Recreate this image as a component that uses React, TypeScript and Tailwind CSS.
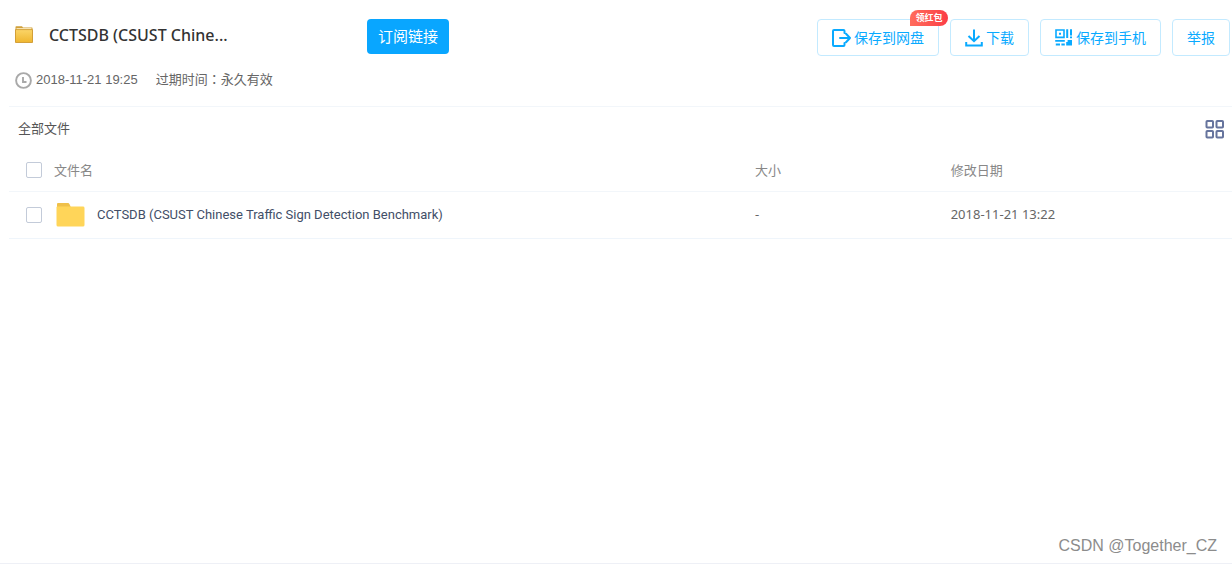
import { useState } from "react";
import type { ReactNode } from "react";

type FileRow = { name: string; size: string; modified: string };

const files: FileRow[] = [
  { name: "CCTSDB (CSUST Chinese Traffic Sign Detection Benchmark)", size: "-", modified: "2018-11-21 13:22" },
];

function SmallFolderIcon() {
  return (
    <svg width="18" height="18" viewBox="0 0 18 18" className="shrink-0" aria-hidden="true">
      <defs>
        <linearGradient id="folder-face" x1="0" y1="0" x2="0" y2="1">
          <stop offset="0" stopColor="#fbd568" />
          <stop offset="1" stopColor="#efb62f" />
        </linearGradient>
      </defs>
      <path d="M0.5 1 Q0.5 0.3 1.2 0.3 H7 L8 1.5 H17 Q17.5 1.5 17.5 2 V16 H0.5 Z" fill="#d0a03a" />
      <rect x="1.5" y="2.2" width="15" height="2" fill="#fff3cf" />
      <path d="M0.5 3.6 H17.5 V16.5 H0.5 Z" fill="url(#folder-face)" stroke="#cf9a30" strokeWidth="0.9" />
    </svg>
  );
}

function FolderIcon() {
  return (
    <svg width="29" height="25" viewBox="0 0 29 25" className="shrink-0" aria-hidden="true">
      <path d="M1 2 Q1 1 2 1 H12 Q13 1 13.4 2 L14.6 4.6 V8 H1 Z" fill="#efc04a" />
      <path d="M1 4.6 H27 Q28.5 4.6 28.5 6 V23 Q28.5 24.5 27 24.5 H2 Q0.5 24.5 0.5 23 V5 Z" fill="#ffd559" />
    </svg>
  );
}

function ClockIcon() {
  return (
    <svg width="17" height="17" viewBox="0 0 17 17" fill="none" stroke="#a9a9a9" className="shrink-0" aria-hidden="true">
      <circle cx="8.5" cy="8.5" r="7.4" strokeWidth="1.9" />
      <path d="M8 5 V10 H11.5" strokeWidth="1.9" />
    </svg>
  );
}

function SaveIcon() {
  return (
    <svg width="19" height="18" viewBox="0 0 19 18" fill="none" stroke="#09aaff" strokeWidth="2" strokeLinecap="round" strokeLinejoin="round" aria-hidden="true">
      <path d="M12.5 4 V2 Q12.5 1 11.5 1 H2 Q1 1 1 2 V16 Q1 17 2 17 H11.5 Q12.5 17 12.5 16 V14" />
      <path d="M8 9 H18 M14 4.8 L18 9 L14 13.2" />
    </svg>
  );
}

function DownloadIcon() {
  return (
    <svg width="18" height="18" viewBox="0 0 18 18" fill="none" stroke="#09aaff" strokeWidth="2" aria-hidden="true">
      <path d="M9 0.5 V12 M3.5 7 L9 12.2 L14.5 7" />
      <path d="M1.2 13 V16.5 H16.8 V13" />
    </svg>
  );
}

function QrIcon() {
  return (
    <svg width="18" height="17" viewBox="0 0 18 17" aria-hidden="true">
      <path d="M1 1 H9 V8.4 H1 Z" fill="none" stroke="#09aaff" strokeWidth="1.6" />
      <path d="M4 3.7 H6 V5.7 H4 Z M11.2 0.2 H13.2 V9 H11.2 Z M15 0.2 H17 V6.4 H15 Z M15 7.4 H17 V9.2 H15 Z M0.2 11 H9.8 V12.8 H0.2 Z M0.8 14.6 H5 V16.4 H0.8 Z M6.4 14.6 H9.8 V16.4 H6.4 Z M12.6 11 H17 V16.4 H11.2 V13 H12.6 Z" fill="#09aaff" />
    </svg>
  );
}

function GridIcon() {
  return (
    <svg width="20" height="20" viewBox="0 0 20 20" fill="none" stroke="#66749d" strokeWidth="2" aria-hidden="true">
      <rect x="1.5" y="2" width="6.5" height="6.5" rx="0.8" />
      <rect x="11.5" y="2" width="6.5" height="6.5" rx="0.8" />
      <rect x="1.5" y="12" width="6.5" height="6.5" rx="0.8" />
      <rect x="11.5" y="12" width="6.5" height="6.5" rx="0.8" />
    </svg>
  );
}

function ActionButton({ icon, badge, children }: { icon?: ReactNode; badge?: string; children: ReactNode }) {
  return (
    <button type="button" className="relative flex h-[37px] items-center gap-[3px] rounded border border-[#c3eaff] bg-white px-[14px] text-sm whitespace-nowrap text-[#09aaff]">
      {icon}
      {children}
      {badge && (
        <span className="absolute -top-[10px] -right-[10px] flex h-4 w-[38px] items-center justify-center rounded-t-lg rounded-br-lg bg-linear-to-r from-[#ff6b5c] to-[#fb3c46] text-[9px] font-bold text-white">
          {badge}
        </span>
      )}
    </button>
  );
}

function CheckBox({ label, checked, onChange }: { label: string; checked: boolean; onChange: () => void }) {
  return (
    <input
      type="checkbox"
      aria-label={label}
      checked={checked}
      onChange={onChange}
      className="size-4 shrink-0 appearance-none rounded-xs border border-[#c3cbd9] bg-white checked:bg-[#09aaff]"
    />
  );
}

export default function App() {
  const [selected, setSelected] = useState<string[]>([]);
  const allSelected = selected.length === files.length;

  const toggle = (name: string) =>
    setSelected((prev) => (prev.includes(name) ? prev.filter((n) => n !== name) : [...prev, name]));

  return (
    <div className="flex min-h-screen flex-col border-b border-[#eef0f6] bg-white pl-[9px] font-['Noto_Sans','Noto_Sans_CJK_SC',sans-serif] text-[13px]">
      <header className="border-b border-[#f2f6fa] pt-[19px] pb-4 pl-[6px]">
        <div className="flex items-start justify-between pr-[2px]">
          <div className="flex items-start">
            <div className="flex h-8 w-[352px] items-center gap-4">
              <SmallFolderIcon />
              <h1 className="text-base font-medium text-[#333]">CCTSDB (CSUST Chine...</h1>
            </div>
            <button type="button" className="h-[35px] rounded bg-[#09a6ff] px-[11px] text-[15px] whitespace-nowrap text-white">
              订阅链接
            </button>
          </div>
          <div className="flex gap-[11px]">
            <ActionButton icon={<SaveIcon />} badge="领红包">保存到网盘</ActionButton>
            <ActionButton icon={<DownloadIcon />}>下载</ActionButton>
            <ActionButton icon={<QrIcon />}>保存到手机</ActionButton>
            <ActionButton>举报</ActionButton>
          </div>
        </div>
        <div className="mt-[14px] flex h-5 items-center font-['Liberation_Sans','Noto_Sans_CJK_TC',sans-serif] text-[#666]">
          <ClockIcon />
          <span className="ml-1">2018-11-21 19:25</span>
          <span lang="zh-TW" className="ml-[18px]">过期时间：永久有效</span>
        </div>
      </header>

      <main className="flex-1">
        <div className="flex h-[43px] items-center justify-between pr-[7px] pl-[9px] text-[#555]">
          <span>全部文件</span>
          <button type="button" aria-label="切换视图">
            <GridIcon />
          </button>
        </div>
        <table className="w-full table-fixed text-left">
          <thead>
            <tr className="h-[41px] border-b border-[#f2f6fa] text-[#888]">
              <th className="w-[61%] pl-[17px] font-normal">
                <div className="flex items-center gap-3">
                  <CheckBox
                    label="全选"
                    checked={allSelected}
                    onChange={() => setSelected(allSelected ? [] : files.map((f) => f.name))}
                  />
                  文件名
                </div>
              </th>
              <th className="w-[16%] font-normal">大小</th>
              <th className="font-normal">修改日期</th>
            </tr>
          </thead>
          <tbody>
            {files.map((file) => (
              <tr key={file.name} className="h-[47px] border-b border-[#eff5fb] text-[#666]">
                <td className="pl-[17px]">
                  <div className="flex items-center">
                    <CheckBox label={file.name} checked={selected.includes(file.name)} onChange={() => toggle(file.name)} />
                    <span className="mr-3 ml-[14px]">
                      <FolderIcon />
                    </span>
                    <a href="#" className="truncate font-['Roboto','Noto_Sans_CJK_SC',sans-serif] text-[#424e67]">{file.name}</a>
                  </div>
                </td>
                <td>{file.size}</td>
                <td>{file.modified}</td>
              </tr>
            ))}
          </tbody>
        </table>
      </main>

      <footer className="pr-[15px] pb-[5px] text-right font-['Liberation_Sans',sans-serif] text-base text-[#8c8c8c]">
        CSDN @Together_CZ
      </footer>
    </div>
  );
}
